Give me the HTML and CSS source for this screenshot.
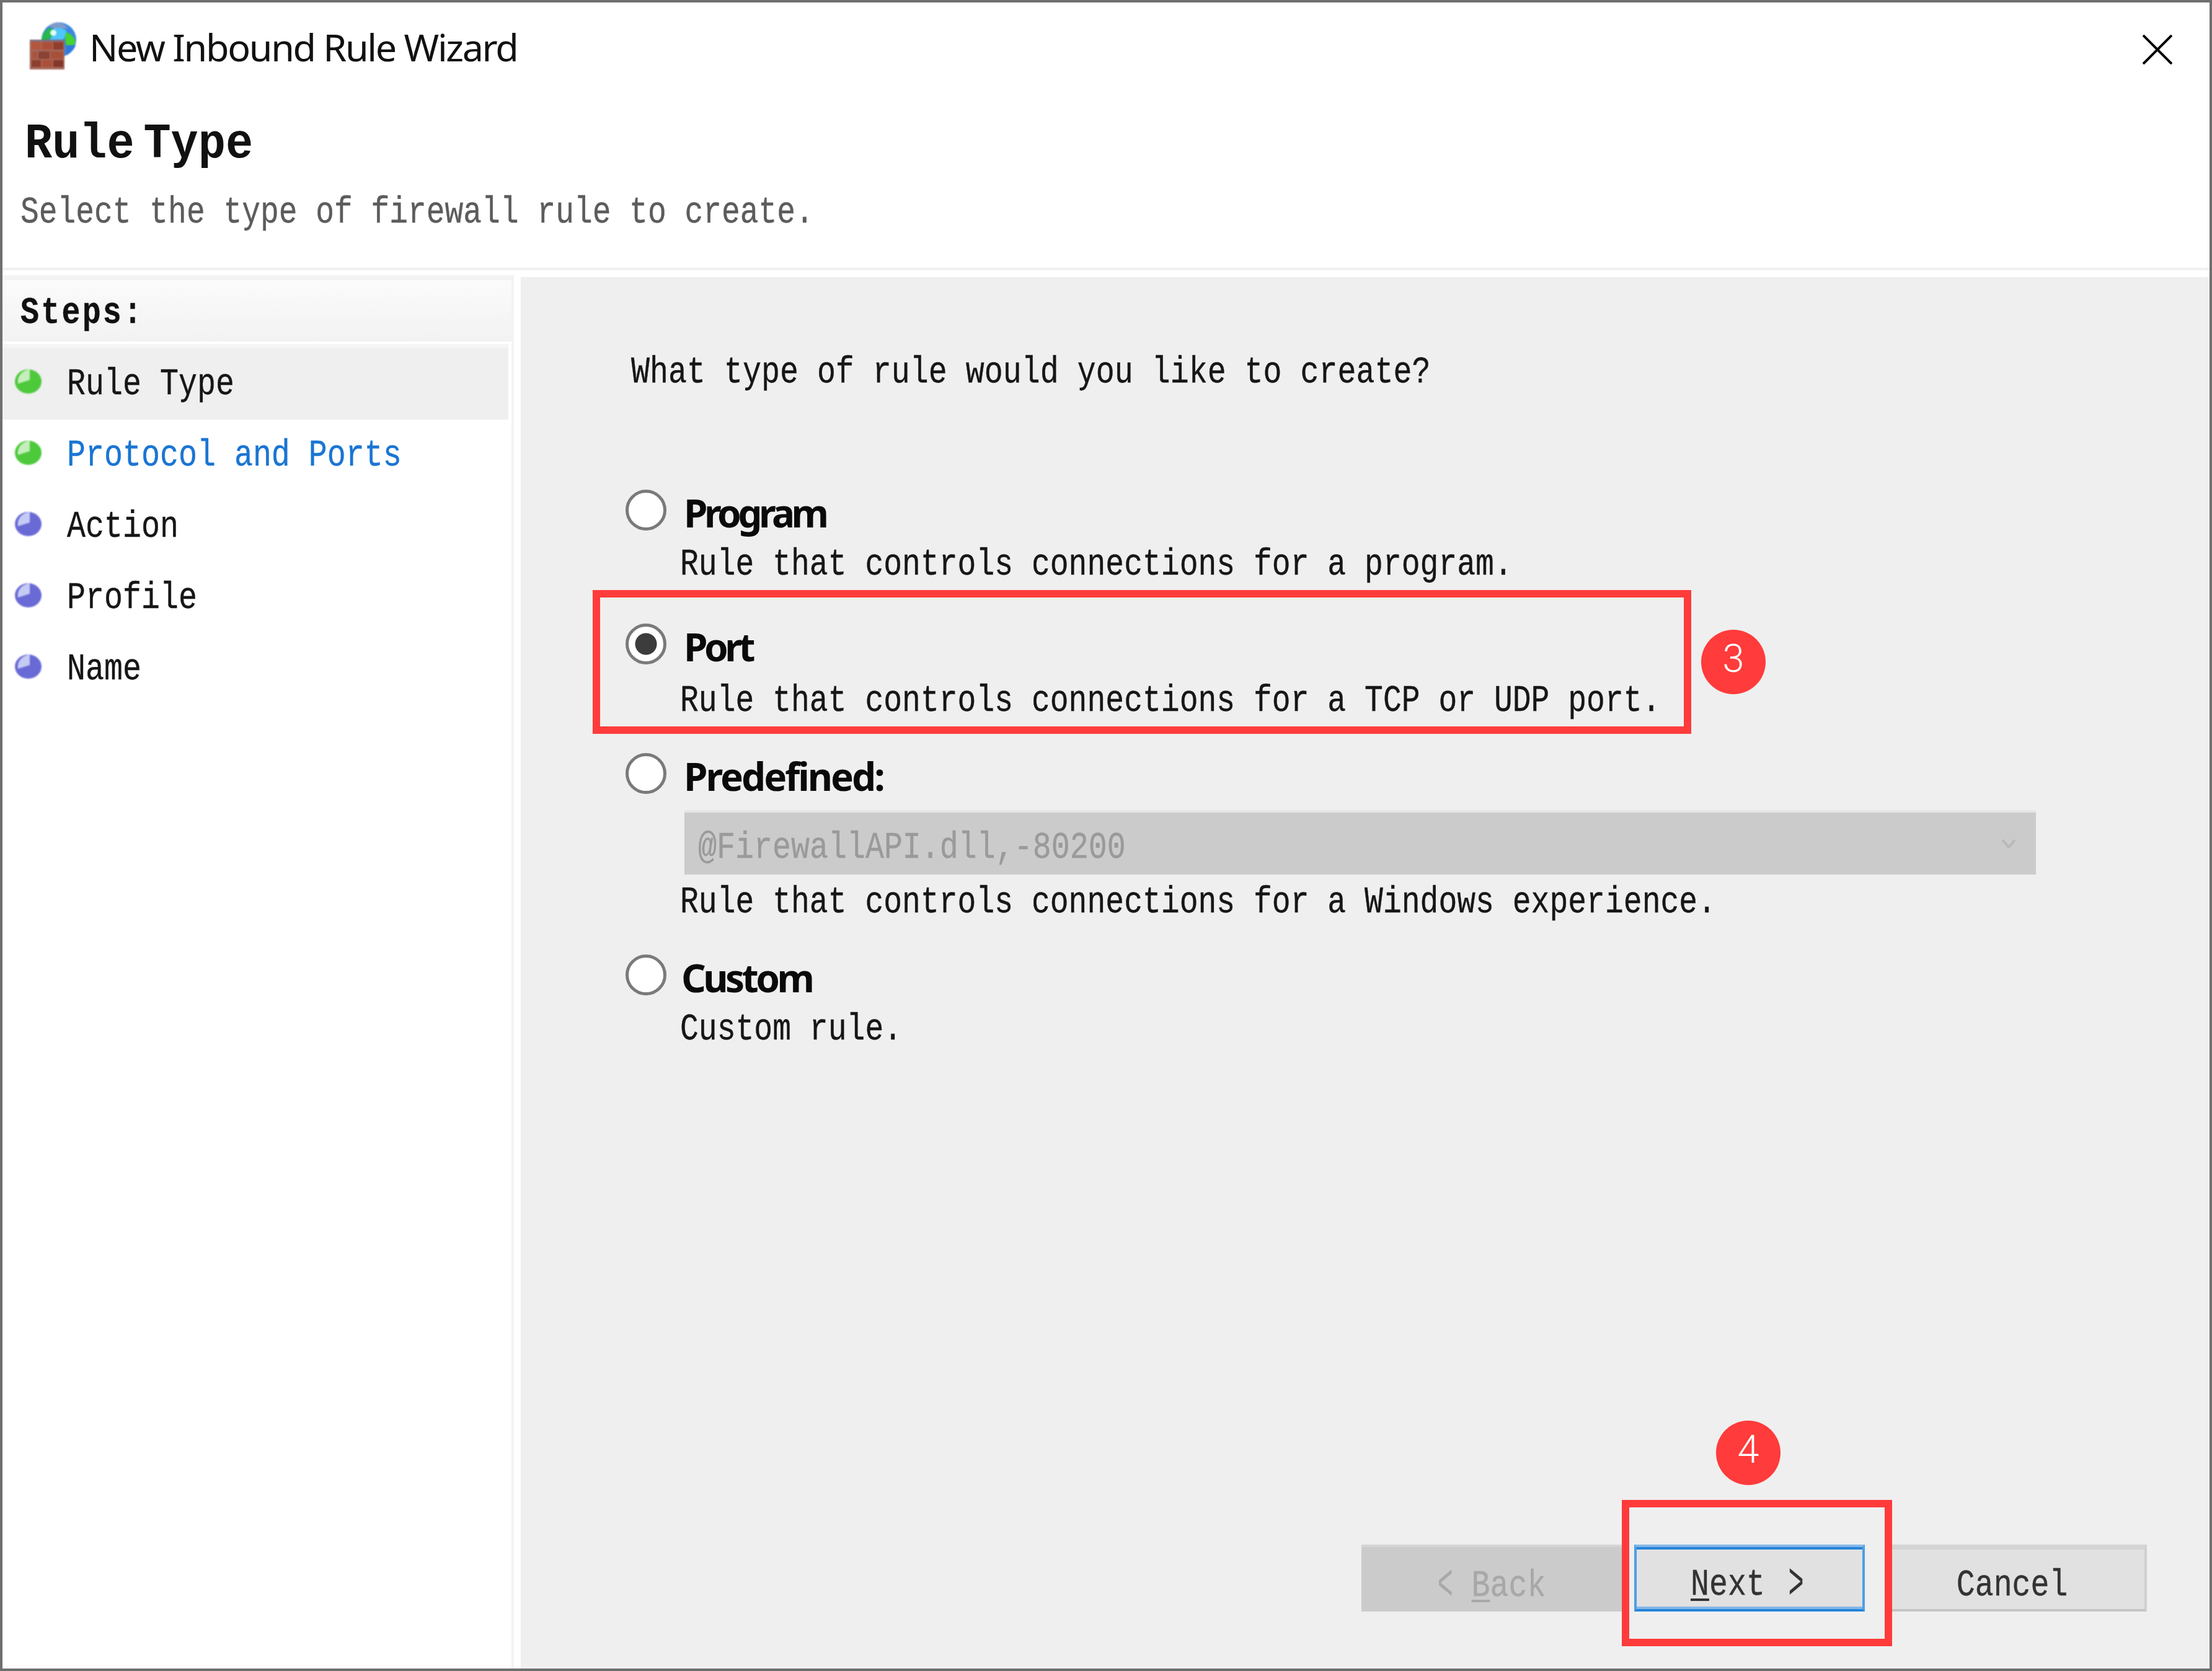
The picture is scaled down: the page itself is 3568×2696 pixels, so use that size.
FILE: index.html
```html
<!DOCTYPE html>
<html lang="en">
<head>
<meta charset="utf-8">
<title>New Inbound Rule Wizard</title>
<link rel="stylesheet" href="styles.css">
</head>
<body>
<div class="window">
  <div class="titlebar">
    <svg class="app-icon" viewBox="0 0 76 76" width="76" height="76">
      <circle cx="47" cy="28" r="28" fill="#3c86e2"/>
      <path d="M47 0A28 28 0 0 0 30 6L40 10H62A28 28 0 0 0 47 0z" fill="#7f9bc8"/>
      <path d="M19 28C20 18 26 10 36 9c3 4 3 10-1 15l-6 4z" fill="#25b84a"/>
      <path d="M38 10c10-2 18 0 21 4-1 8-3 14-9 16H30c6-6 10-12 8-20z" fill="#4cc6fb"/>
      <circle cx="38" cy="17" r="5" fill="#e6fbf2"/>
      <path d="M59 16c8 2 14 10 15 17-4 5-9 6-15 4-2-8-3-14 0-21z" fill="#46d42e"/>
      <path d="M59 37h15c-2 6-7 12-15 16z" fill="#2f78dc"/>
      <rect x="0" y="28" width="56" height="48" fill="#a5685a"/>
      <rect x="0" y="28" width="56" height="3" fill="#7c6a80"/>
      <rect x="3" y="32" width="15" height="12" fill="#b4563c"/>
      <rect x="20" y="32" width="16" height="12" fill="#ad4f38"/>
      <rect x="38" y="32" width="16" height="12" fill="#8f3d2c"/>
      <rect x="3" y="47" width="9" height="12" fill="#a9533f"/>
      <rect x="14" y="47" width="18" height="12" fill="#8b4133"/>
      <rect x="34" y="47" width="20" height="12" fill="#a84f39"/>
      <rect x="3" y="61" width="15" height="11" fill="#8f3d2c"/>
      <rect x="20" y="61" width="16" height="11" fill="#ad4f38"/>
      <rect x="38" y="61" width="16" height="11" fill="#843628"/>
    </svg>
    <span class="title">New Inbound Rule Wizard</span>
    <svg class="close" viewBox="0 0 48 48" width="48" height="48"><path d="M1 1L47 47M47 1L1 47" stroke="#000" stroke-width="4" fill="none"/></svg>
  </div>
  <div class="header">
    <h1 class="heading">Rule Type</h1>
    <p class="mono subtitle">Select the type of firewall rule to create.</p>
  </div>
  <div class="divider"></div>
  <div class="content">
    <aside class="steps">
      <div class="steps-head"><span class="mono steps-title">Steps:</span></div>
      <div class="step step-current">
        <svg class="dot" viewBox="0 0 43 39"><ellipse cx="21.5" cy="19.5" rx="21.5" ry="19.5" fill="#4ec93c"/><path d="M24 17L5 23A21.5 19.5 0 0 1 24 0z" fill="#c4eebb"/></svg>
        <span class="mono">Rule Type</span>
      </div>
      <div class="step">
        <svg class="dot" viewBox="0 0 43 39"><ellipse cx="21.5" cy="19.5" rx="21.5" ry="19.5" fill="#4ec93c"/><path d="M24 17L5 23A21.5 19.5 0 0 1 24 0z" fill="#c4eebb"/></svg>
        <span class="mono step-link">Protocol and Ports</span>
      </div>
      <div class="step">
        <svg class="dot" viewBox="0 0 43 39"><ellipse cx="21.5" cy="19.5" rx="21.5" ry="19.5" fill="#6a6ad6"/><path d="M24 17L5 23A21.5 19.5 0 0 1 24 0z" fill="#c6cbf3"/></svg>
        <span class="mono">Action</span>
      </div>
      <div class="step">
        <svg class="dot" viewBox="0 0 43 39"><ellipse cx="21.5" cy="19.5" rx="21.5" ry="19.5" fill="#6a6ad6"/><path d="M24 17L5 23A21.5 19.5 0 0 1 24 0z" fill="#c6cbf3"/></svg>
        <span class="mono">Profile</span>
      </div>
      <div class="step">
        <svg class="dot" viewBox="0 0 43 39"><ellipse cx="21.5" cy="19.5" rx="21.5" ry="19.5" fill="#6a6ad6"/><path d="M24 17L5 23A21.5 19.5 0 0 1 24 0z" fill="#c6cbf3"/></svg>
        <span class="mono">Name</span>
      </div>
    </aside>
    <main class="main">
      <p class="mono question">What type of rule would you like to create?</p>
      <div class="option option-program">
        <div class="option-head"><span class="radio"></span><span class="label label-program">Program</span></div>
        <p class="mono desc desc-tight">Rule that controls connections for a program.</p>
      </div>
      <div class="option option-port">
        <div class="option-head"><span class="radio radio-on"></span><span class="label label-port">Port</span></div>
        <p class="mono desc desc-wide">Rule that controls connections for a TCP or UDP port.</p>
      </div>
      <div class="option option-predefined">
        <div class="option-head"><span class="radio"></span><span class="label label-predefined">Predefined:</span></div>
        <div class="combo">
          <span class="mono combo-text">@FirewallAPI.dll,-80200</span>
          <svg class="combo-arrow" viewBox="0 0 24 16" width="24" height="16"><path d="M2 2L12 14L22 2" stroke="#b9b9b9" stroke-width="4" fill="none"/></svg>
        </div>
        <p class="mono desc desc-combo">Rule that controls connections for a Windows experience.</p>
      </div>
      <div class="option option-custom">
        <div class="option-head"><span class="radio"></span><span class="label label-custom">Custom</span></div>
        <p class="mono desc desc-tight">Custom rule.</p>
      </div>
      <div class="buttons">
        <div class="btn btn-back"><span class="mono btn-text"><span class="chev chev-left">&lt;</span> <u>B</u>ack</span></div>
        <div class="btn btn-next"><span class="mono btn-text"><u>N</u>ext <span class="chev">&gt;</span></span></div>
        <div class="btn btn-cancel"><span class="mono btn-text">Cancel</span></div>
      </div>
    </main>
  </div>
  <div class="mark mark-port"></div>
  <div class="mark mark-next"></div>
  <div class="badge badge-3">3</div>
  <div class="badge badge-4">4</div>
</div>
</body>
</html>
```
FILE: styles.css
```css
* { box-sizing: border-box; }
html, body { margin: 0; padding: 0; }
body { width: 3568px; height: 2696px; padding: 4px; background: #6f6f6f; overflow: hidden; }
.window { position: relative; width: 3560px; height: 2688px; background: #fff; display: flex; flex-direction: column; }

.mono {
  font-family: "Liberation Mono", monospace;
  font-size: 62px;
  line-height: 70px;
  color: #161616;
  white-space: nowrap;
  display: inline-block;
  transform: scaleX(.806);
  transform-origin: left center;
  margin: 0;
  -webkit-text-stroke: .4px currentColor;
}

.titlebar { height: 112px; padding: 32px 60px 0 44px; display: flex; align-items: flex-start; flex: none; }
.app-icon { flex: none; display: block; filter: blur(.8px); }
.title { font-family: "Noto Sans", sans-serif; font-size: 61px; line-height: 80px; margin-left: 20px; letter-spacing: -2.3px; color: #111; white-space: nowrap; }
.close { margin-left: auto; margin-top: 20px; }

.header { height: 316px; padding-left: 29px; flex: none; }
.heading { margin: 0 0 0 7px; font-family: "Liberation Mono", monospace; font-weight: 700; font-size: 80px; line-height: 90px; word-spacing: -32px; color: #111; transform: scaleX(.92); transform-origin: left center; white-space: nowrap; padding-top: 72px; height: 162px; }
.subtitle { display: block; color: #5c5c5c; margin-top: 30px; transform: scaleX(.8); }

.divider { height: 4px; background: #f0f0f0; flex: none; }

.content { flex: 1; display: flex; padding-top: 8px; min-height: 0; }

.steps { width: 825px; flex: none; border-right: 4px solid #f3f3f3; border-top: 8px solid #f3f3f3; }
.steps-head { height: 99px; background: linear-gradient(#fbfbfb, #f2f2f2); padding: 18px 0 0 29px; }
.steps-title { font-weight: 700; color: #111; letter-spacing: 4px; }
.step { height: 115px; margin-right: 5px; display: flex; align-items: center; padding-left: 20px; }
.step-current { margin-top: 4px; height: 122px; background: #efefef; border-top: 7px solid #f5f5f5; }
.dot { width: 43px; height: 39px; flex: none; margin-right: 41px; margin-top: -8px; filter: blur(.8px); }
.step-link { color: #1a75d2; }

.main { flex: 1; margin-left: 11px; margin-top: 3px; background: #efefef; display: flex; flex-direction: column; padding: 0 101px 92px 169px; min-width: 0; }
.question { display: block; padding-top: 119px; height: 189px; margin-left: 9px; }

.option-program { margin-top: 154px; }
.option-port { margin-top: 60px; }
.option-predefined { margin-top: 49px; }
.option-custom { margin-top: 49px; }

.option-head { display: flex; align-items: center; height: 66px; }
.radio { width: 66px; height: 66px; border-radius: 50%; border: 5px solid #7a7a7a; background: #fff; flex: none; position: relative; }
.radio-on { background: radial-gradient(circle, #3c3c3c 0 17px, #fff 18px); }
.label { font-family: "Noto Sans", sans-serif; font-weight: 700; font-size: 62px; line-height: 66px; color: #0a0a0a; margin-left: 28px; white-space: nowrap; position: relative; top: 4px; }
.label-program { letter-spacing: -5.5px; }
.label-port { letter-spacing: -5.5px; }
.label-predefined { letter-spacing: -3px; }
.label-custom { margin-left: 24px; letter-spacing: -4.5px; }

.desc { display: block; margin-left: 88px; transform: scaleX(.802); }
.desc-tight { margin-top: 20px; }
.desc-wide { margin-top: 24px; }
.desc-combo { margin-top: 10px; }

.combo { margin: 30px 0 0 95px; width: 2180px; height: 100px; background: #cbcbcb; box-shadow: 0 -4px 0 #e6e6e6; display: flex; align-items: center; padding: 0 32px 0 22px; }
.combo-text { color: #9a9a9a; position: relative; top: 7px; }
.combo-arrow { margin-left: auto; }

.buttons { margin-top: auto; display: flex; justify-content: flex-end; }
.btn { height: 108px; display: flex; align-items: center; justify-content: center; padding-top: 20px; }
.btn-text { transform-origin: center; }
.btn u { text-decoration-thickness: 4px; text-underline-offset: 6px; }
.chev { display: inline-block; font-size: 84px; line-height: 60px; transform: translateY(6px) scaleX(.62); -webkit-text-stroke: 0; }
.chev-left { margin-right: -10px; }
.btn-back { width: 420px; background: #cbcbcb; border-top: 4px solid #d5d5d5; padding-right: 8px; }
.btn-back .btn-text { color: #a8a8a8; }
.btn-next { width: 372px; margin-left: 20px; background: #e1e1e1; border: 4px solid #4d9ee3; border-top-color: #85b8e6; border-bottom-color: #2485dc; box-shadow: inset 0 4px 0 #2485dc, inset 0 -4px 0 #85b8e6; }
.btn-next .btn-text { color: #333; }
.btn-cancel { width: 420px; margin-left: 35px; background: #e1e1e1; border-top: 8px solid #d4d4d4; border-bottom: 4px solid #c4c4c4; border-right: 4px solid #d0d0d0; padding-right: 10px; }
.btn-cancel .btn-text { color: #333; }

.mark { position: absolute; border: 12px solid #ff3b3b; }
.mark-port { left: 952px; top: 948px; width: 1772px; height: 232px; }
.mark-next { left: 2612px; top: 2416px; width: 436px; height: 236px; }

.badge { position: absolute; width: 104px; height: 104px; border-radius: 50%; background: #ff3b3b; color: #fff; font-family: Roboto, sans-serif; font-weight: 300; font-size: 63px; line-height: 1; display: flex; align-items: center; justify-content: center; padding-bottom: 12px; }
.badge-3 { left: 2740px; top: 1012px; }
.badge-4 { left: 2764px; top: 2288px; }
```
